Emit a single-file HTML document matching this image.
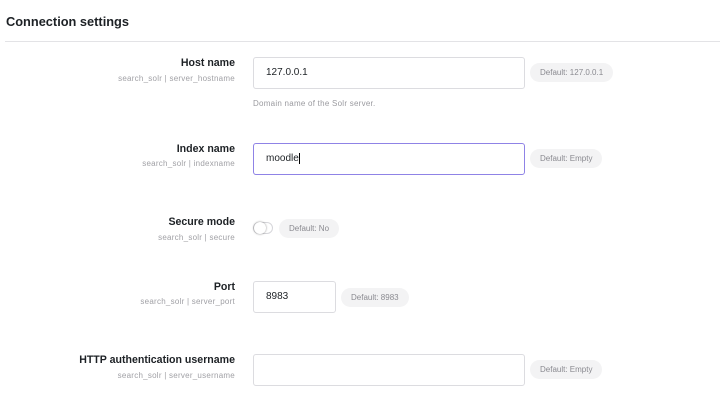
<!DOCTYPE html>
<html><head><style>
body{margin:0;width:720px;height:404px;background:#fff;font-family:"Liberation Sans",sans-serif;position:relative;overflow:hidden}
.a{position:absolute}
h1{position:absolute;left:6px;top:14px;margin:0;font-size:12.8px;font-weight:bold;color:#1d2125}
.hr{position:absolute;left:5px;right:0;top:41px;border-top:1px solid #e3e3e6}
.lbl{position:absolute;right:485px;text-align:right;font-size:10.6px;font-weight:bold;color:#1d2125;white-space:nowrap}
.sub{position:absolute;right:485px;text-align:right;font-size:8px;letter-spacing:.25px;color:#a0a0a5;white-space:nowrap}
.in{position:absolute;left:253px;border:1px solid #dcdce0;border-radius:3px;box-sizing:border-box;height:32px;font-size:10px;color:#1d2125;line-height:30px;padding-left:12px}
.bd{position:absolute;height:19px;line-height:19px;border-radius:10px;background:#f3f3f4;color:#8a8a90;font-size:8px;padding:0 10px;white-space:nowrap}
</style></head><body>
<h1>Connection settings</h1>
<div class="hr"></div>

<div class="lbl" style="top:57px">Host name</div>
<div class="sub" style="top:74px">search_solr | server_hostname</div>
<div class="in" style="top:57px;width:272px">127.0.0.1</div>
<div class="bd" style="left:530px;top:63px">Default: 127.0.0.1</div>
<div class="a" style="left:253px;top:99px;font-size:8px;letter-spacing:.25px;color:#9a9a9f">Domain name of the Solr server.</div>

<div class="lbl" style="top:143px">Index name</div>
<div class="sub" style="top:159px">search_solr | indexname</div>
<div class="in" style="top:143px;width:272px;border-color:#8f83e6">moodle<span style="border-left:1px solid #000;margin-left:0"></span></div>
<div class="bd" style="left:530px;top:149px">Default: Empty</div>

<div class="lbl" style="top:216px">Secure mode</div>
<div class="sub" style="top:233px">search_solr | secure</div>
<div class="a" style="left:253px;top:222px;width:20px;height:12px;border:1px solid #d6d6da;border-radius:7px;box-sizing:border-box"></div>
<div class="a" style="left:254px;top:222px;width:12px;height:12px;border-radius:50%;background:#fff;box-shadow:0 0 2px rgba(0,0,0,.45)"></div>
<div class="bd" style="left:279px;top:219px">Default: No</div>

<div class="lbl" style="top:281px">Port</div>
<div class="sub" style="top:297px">search_solr | server_port</div>
<div class="in" style="top:281px;width:83px">8983</div>
<div class="bd" style="left:341px;top:288px">Default: 8983</div>

<div class="lbl" style="top:354px">HTTP authentication username</div>
<div class="sub" style="top:371px">search_solr | server_username</div>
<div class="in" style="top:354px;width:272px"></div>
<div class="bd" style="left:530px;top:360px">Default: Empty</div>
</body></html>
